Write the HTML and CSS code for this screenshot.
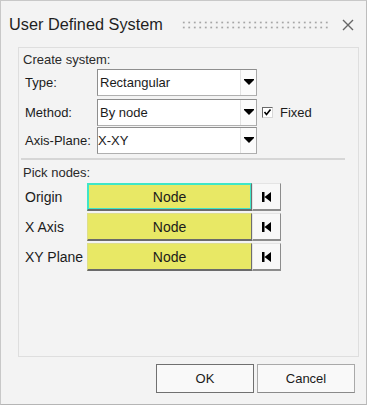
FILE: index.html
```html
<!DOCTYPE html>
<html>
<head>
<meta charset="utf-8">
<link rel="stylesheet" href="styles.css">
</head>
<body>
<div class="dialog">
  <div class="header">
    <div class="title">User Defined System</div>
    <div class="grip"></div>
    <svg class="close" width="12" height="12" viewBox="0 0 12 12"><path d="M1 1 L11 11 M11 1 L1 11" stroke="#666" stroke-width="1.4" fill="none"/></svg>
  </div>
  <div class="panel">
    <div class="section-label">Create system:</div>
    <div class="form-row row1">
      <span class="label">Type:</span>
      <div class="combo"><span class="combo-text">Rectangular</span><span class="combo-btn"><svg width="10" height="7" viewBox="0 0 10 7"><path d="M0 0 H10 V1 L5 6 L0 1 Z" fill="#000"/></svg></span></div>
    </div>
    <div class="form-row row2">
      <span class="label">Method:</span>
      <div class="combo"><span class="combo-text">By node</span><span class="combo-btn"><svg width="10" height="7" viewBox="0 0 10 7"><path d="M0 0 H10 V1 L5 6 L0 1 Z" fill="#000"/></svg></span></div>
      <span class="check"><svg width="9" height="9" viewBox="0 0 9 9"><path d="M1.5 4 L3.5 6.5 L7.5 1.5" stroke="#000" stroke-width="1.6" fill="none"/></svg></span>
      <span class="check-label">Fixed</span>
    </div>
    <div class="form-row row3">
      <span class="label">Axis-Plane:</span>
      <div class="combo"><span class="combo-text tight">X-XY</span><span class="combo-btn"><svg width="10" height="7" viewBox="0 0 10 7"><path d="M0 0 H10 V1 L5 6 L0 1 Z" fill="#000"/></svg></span></div>
    </div>
    <div class="separator"></div>
    <div class="section-label pick">Pick nodes:</div>
    <div class="node-list">
      <div class="node-row">
        <span class="node-label">Origin</span>
        <div class="node-btn focused">Node</div>
        <div class="icon-btn"><svg width="10" height="10" viewBox="0 0 10 10"><path d="M0 0 H2.5 V10 H0 Z M9 0 V10 L2.5 5 Z" fill="#000"/></svg></div>
      </div>
      <div class="node-row">
        <span class="node-label">X Axis</span>
        <div class="node-btn">Node</div>
        <div class="icon-btn"><svg width="10" height="10" viewBox="0 0 10 10"><path d="M0 0 H2.5 V10 H0 Z M9 0 V10 L2.5 5 Z" fill="#000"/></svg></div>
      </div>
      <div class="node-row">
        <span class="node-label">XY Plane</span>
        <div class="node-btn">Node</div>
        <div class="icon-btn"><svg width="10" height="10" viewBox="0 0 10 10"><path d="M0 0 H2.5 V10 H0 Z M9 0 V10 L2.5 5 Z" fill="#000"/></svg></div>
      </div>
    </div>
  </div>
  <div class="footer">
    <div class="btn default">OK</div>
    <div class="btn">Cancel</div>
  </div>
</div>
</body>
</html>
```
FILE: styles.css
```css
html, body {
  margin: 0;
  padding: 0;
  background: #f3f3f3;
}
.dialog {
  width: 367px;
  height: 405px;
  box-sizing: border-box;
  border: 1px solid #c8c8c8;
  border-right-color: #bdbdbd;
  border-bottom-color: #b5b5b5;
  background: #f3f3f3;
  display: flex;
  flex-direction: column;
  font-family: "Liberation Sans", Arial, sans-serif;
  font-size: 13px;
  color: #1b1b1b;
}
.header {
  height: 46px;
  display: flex;
  align-items: center;
  padding-left: 8px;
  padding-right: 12px;
  box-sizing: border-box;
}
.title {
  font-size: 16.3px;
  color: #1f1f1f;
  margin-top: 1px;
}
.grip {
  margin-left: auto;
  width: 148px;
  height: 10px;
  background-image: radial-gradient(circle, #a6a6a6 0.9px, transparent 1.2px);
  background-size: 5.5px 5px;
  background-position: 0 0;
  margin-top: 1px;
}
.close {
  margin-left: 13px;
  margin-top: 1px;
}
.panel {
  flex: 1;
  margin-left: 17px;
  margin-right: 7px;
  border: 1px solid #dedede;
  display: flex;
  flex-direction: column;
}
.section-label {
  padding-left: 4px;
  margin-top: 3px;
  height: 18px;
  line-height: 18px;
  color: #2a2a2a;
}
.section-label.pick {
  margin-top: 4px;
  margin-bottom: 1px;
}
.form-row {
  display: flex;
  align-items: center;
  height: 27px;
}
.row1 { margin-top: 0; }
.row2 { margin-top: 3px; }
.row3 { margin-top: 1px; }
.label {
  width: 78px;
  padding-left: 6px;
  box-sizing: border-box;
  flex: none;
}
.combo {
  width: 160px;
  height: 27px;
  box-sizing: border-box;
  border: 1px solid #8e8e8e;
  border-right-color: #a8a8a8;
  border-bottom-color: #b0b0b0;
  background: #fff;
  display: flex;
  align-items: center;
}
.combo-text {
  flex: 1;
  padding-left: 2px;
}
.combo-text.tight {
  padding-left: 0;
}
.combo-btn {
  width: 15px;
  height: 25px;
  border-left: 1px solid #e2e2e2;
  display: flex;
  align-items: center;
  justify-content: center;
  background: #fbfbfb;
}
.check {
  width: 11px;
  height: 11px;
  box-sizing: border-box;
  margin-left: 5px;
  border: 1px solid #6a6a6a;
  border-right-color: #d8d8d8;
  border-bottom-color: #d8d8d8;
  background: #fff;
  display: flex;
  align-items: center;
  justify-content: center;
}
.check-label {
  margin-left: 7px;
}
.separator {
  margin-top: 4px;
  margin-left: 2px;
  width: 324px;
  height: 2px;
  background: #d6d6d6;
}
.node-list {
  display: flex;
  flex-direction: column;
  gap: 2px;
}
.node-row {
  display: flex;
  align-items: stretch;
  height: 28px;
}
.node-label {
  width: 68px;
  padding-left: 6px;
  box-sizing: border-box;
  display: flex;
  align-items: center;
  font-size: 14px;
  flex: none;
}
.node-btn {
  width: 165px;
  box-sizing: border-box;
  background: #e8e865;
  border: 1px solid #dede8a;
  border-right: 1px solid #6e6e6e;
  border-bottom: 2px solid #6a6a6a;
  display: flex;
  align-items: center;
  justify-content: center;
  font-size: 14px;
}
.node-btn.focused {
  box-shadow: inset 0 0 0 1px #3fe6c8;
  border-top-color: #3fe6c8;
  border-left-color: #3fe6c8;
}
.icon-btn {
  width: 29px;
  box-sizing: border-box;
  background: #f8f8f8;
  border: 1px solid #e4e4e4;
  border-right: 1px solid #8c8c8c;
  border-bottom: 2px solid #8c8c8c;
  display: flex;
  align-items: center;
  justify-content: center;
}
.footer {
  display: flex;
  justify-content: flex-end;
  gap: 3px;
  margin-top: 7px;
  margin-bottom: 11px;
  padding-right: 11px;
}
.btn {
  width: 98px;
  height: 29px;
  box-sizing: border-box;
  border: 1px solid #a9a9a9;
  border-bottom-color: #8a8a8a;
  background: #f9f9f9;
  display: flex;
  align-items: center;
  justify-content: center;
  font-size: 13px;
}
.btn.default {
  border-color: #707070;
}
```
